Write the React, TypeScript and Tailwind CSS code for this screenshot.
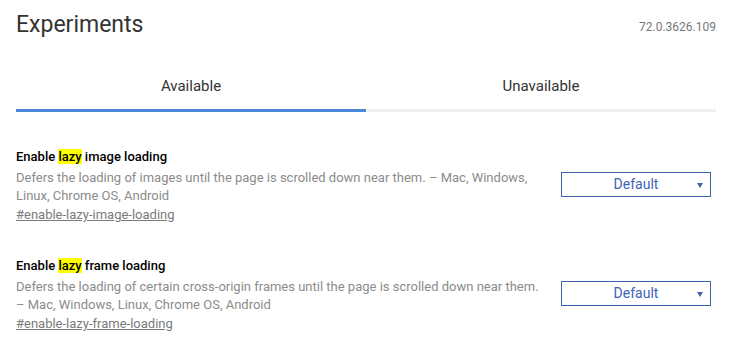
const experiments = [
  {
    pre: "Enable ",
    hit: "lazy",
    post: " image loading",
    desc: "Defers the loading of images until the page is scrolled down near them. – Mac, Windows, Linux, Chrome OS, Android",
    link: "#enable-lazy-image-loading",
  },
  {
    pre: "Enable ",
    hit: "lazy",
    post: " frame loading",
    desc: "Defers the loading of certain cross-origin frames until the page is scrolled down near them. – Mac, Windows, Linux, Chrome OS, Android",
    link: "#enable-lazy-frame-loading",
  },
]

export default function App() {
  return (
    <div className="min-h-[352px] w-[733px] bg-white font-['Roboto',sans-serif] text-[#333]">
      <div className="ml-[16px] w-[700px]">
        <div className="flex h-[62px] items-start justify-between pt-[10px]">
          <h1 className="text-[23px] leading-[30px] text-[#333]">Experiments</h1>
          <span className="pt-[8px] text-[12px] leading-[18px] text-[#777]">
            72.0.3626.109
          </span>
        </div>

        <div className="flex">
          <div className="flex w-[350px] flex-col">
            <div className="flex h-[47px] items-center justify-center pt-[1px] text-[15px] text-[#333]">
              Available
            </div>
            <div className="h-[3px] bg-[#4a88da]" />
          </div>
          <div className="flex w-[350px] flex-col">
            <div className="flex h-[47px] items-center justify-center pt-[1px] text-[15px] text-[#333]">
              Unavailable
            </div>
            <div className="h-[3px] bg-[#efefef]" />
          </div>
        </div>

        <div className="pt-[36px]">
          {experiments.map((e) => (
            <div key={e.link} className="mb-[33px] flex justify-between">
              <div className="w-[528px]">
                <h2 className="text-[13px] leading-[18px] font-medium text-black">
                  {e.pre}
                  <span className="bg-[#ffff00]">{e.hit}</span>
                  {e.post}
                </h2>
                <p className="mt-[3px] text-[13px] leading-[18px] text-[#8c8c8c]">
                  {e.desc}
                </p>
                <a className="mt-[1px] block text-[13px] leading-[18px] text-[#7b7b7b] underline">
                  {e.link}
                </a>
              </div>
              <div className="mr-[5px] pt-[24px]">
                <div className="relative flex h-[25px] w-[150px] items-center justify-center border border-[#3d64ab] text-[14px] text-[#4063b5]">
                  Default
                  <span className="absolute right-[7px] top-[10px] h-0 w-0 border-x-[3.5px] border-t-[5px] border-x-transparent border-t-[#3d64ab]" />
                </div>
              </div>
            </div>
          ))}
        </div>
      </div>
    </div>
  )
}
